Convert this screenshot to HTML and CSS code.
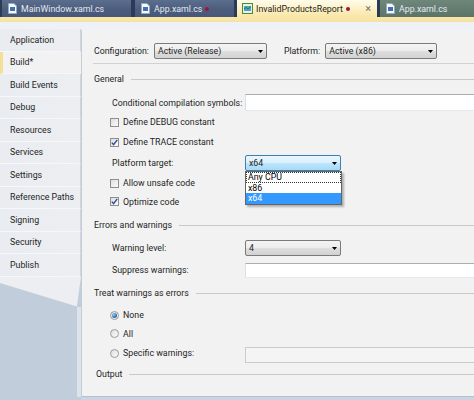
FILE: index.html
```html
<!DOCTYPE html>
<html>
<head>
<meta charset="utf-8">
<title>Project Properties</title>
<link rel="stylesheet" href="styles.css">
</head>
<body>
<div class="tabbar">
  <div class="doctab t1">
    <svg class="ficon" width="9" height="11" viewBox="0 0 9 11"><path d="M0.5 0.5 H6 L8.5 3 V10.5 H0.5 Z" fill="#f4f7fb" stroke="#9aa8bd"/><rect x="2" y="4" width="5" height="4" fill="#3f6fb5"/></svg>
    <span>MainWindow.xaml.cs</span>
  </div>
  <div class="doctab t2">
    <svg class="ficon" width="9" height="11" viewBox="0 0 9 11"><path d="M0.5 0.5 H6 L8.5 3 V10.5 H0.5 Z" fill="#f4f7fb" stroke="#9aa8bd"/><rect x="2" y="4" width="5" height="4" fill="#3f6fb5"/></svg>
    <span>App.xaml.cs</span><span class="dot"></span>
  </div>
  <div class="doctab active">
    <svg class="ficon" width="11" height="11" viewBox="0 0 11 11"><rect x="0.5" y="0.5" width="10" height="10" fill="#e8f3e0" stroke="#4c8a3a"/><rect x="2" y="3" width="7" height="5" fill="#4aa0d8"/><path d="M2 6 L4 4.5 L6 6 L9 3.5" stroke="#2f7d24" fill="none"/></svg>
    <span>InvalidProductsReport</span><span class="dot"></span><span class="close">×</span>
  </div>
  <div class="doctab t4">
    <svg class="ficon" width="9" height="11" viewBox="0 0 9 11"><path d="M0.5 0.5 H6 L8.5 3 V10.5 H0.5 Z" fill="#f4f7fb" stroke="#9aa8bd"/><rect x="2" y="4" width="5" height="4" fill="#3f6fb5"/></svg>
    <span>App.xaml.cs</span>
  </div>
</div>
<div class="strip"></div>
<div class="main">
  <div class="side">
    <div class="nav">Application</div>
    <div class="nav sel">Build*</div>
    <div class="nav">Build Events</div>
    <div class="nav">Debug</div>
    <div class="nav">Resources</div>
    <div class="nav">Services</div>
    <div class="nav">Settings</div>
    <div class="nav">Reference Paths</div>
    <div class="nav">Signing</div>
    <div class="nav">Security</div>
    <div class="nav">Publish</div>
    <div class="navend"></div>
    <div class="navfill"></div>
  </div>
  <div class="pane">
    <div class="config">
      <span>Configuration:</span>
      <div class="combo cfg"><span>Active (Release)</span><svg class="arrow" width="5" height="3" viewBox="0 0 5 3"><path d="M0 0 H5 L2.5 3 Z" fill="#000"/></svg></div>
      <span class="plat">Platform:</span>
      <div class="combo cfg"><span>Active (x86)</span><svg class="arrow" width="5" height="3" viewBox="0 0 5 3"><path d="M0 0 H5 L2.5 3 Z" fill="#000"/></svg></div>
    </div>
    <div class="hr"></div>

    <div class="sec s-general"><span>General</span><div class="line"></div></div>
    <div class="row r-cond"><span class="lbl">Conditional compilation symbols:</span><div class="text"></div></div>
    <div class="row chk r-debug"><span class="cb"></span><span>Define DEBUG constant</span></div>
    <div class="row chk r-trace"><span class="cb"><svg width="7" height="7" viewBox="0 0 7 7"><path d="M0.8 3.6 L2.6 5.6 L6.2 0.9" stroke="#2b4b96" stroke-width="1.4" fill="none"/></svg></span><span>Define TRACE constant</span></div>
    <div class="row r-pt"><span class="lbl">Platform target:</span>
      <div class="combo focus pt"><span>x64</span><svg class="arrow" width="5" height="3" viewBox="0 0 5 3"><path d="M0 0 H5 L2.5 3 Z" fill="#000"/></svg>
        <div class="drop">
          <div class="opt hot">Any CPU</div>
          <div class="opt">x86</div>
          <div class="opt on">x64</div>
        </div>
      </div>
    </div>
    <div class="row chk r-allow"><span class="cb"></span><span>Allow unsafe code</span></div>
    <div class="row chk r-opt"><span class="cb"><svg width="7" height="7" viewBox="0 0 7 7"><path d="M0.8 3.6 L2.6 5.6 L6.2 0.9" stroke="#2b4b96" stroke-width="1.4" fill="none"/></svg></span><span>Optimize code</span></div>

    <div class="sec s-errors"><span>Errors and warnings</span><div class="line"></div></div>
    <div class="row r-wl"><span class="lbl">Warning level:</span><div class="combo wl"><span>4</span><svg class="arrow" width="5" height="3" viewBox="0 0 5 3"><path d="M0 0 H5 L2.5 3 Z" fill="#000"/></svg></div></div>
    <div class="row r-sup"><span class="lbl">Suppress warnings:</span><div class="text sup"></div></div>

    <div class="sec s-treat"><span>Treat warnings as errors</span><div class="line"></div></div>
    <div class="row chk r-none"><span class="rb on"></span><span>None</span></div>
    <div class="row chk r-all"><span class="rb"></span><span>All</span></div>
    <div class="row chk r-spec"><span class="rb"></span><span class="lbl2">Specific warnings:</span><div class="text dis"></div></div>

    <div class="sec s-output"><span>Output</span><div class="line"></div></div>
  </div>
</div>
</body>
</html>
```
FILE: styles.css
```css
* { box-sizing: border-box; }
html, body { margin: 0; padding: 0; }
body {
  width: 474px;
  height: 400px;
  overflow: hidden;
  font-family: Roboto, "Liberation Sans", sans-serif;
  font-size: 8.8px;
  color: #1e1e1e;
  background: #eef1f5;
}

/* document tabs */
.tabbar {
  height: 17px;
  display: flex;
  background: #2b3a57;
  overflow: hidden;
}
.doctab {
  flex: none;
  height: 17px;
  display: flex;
  align-items: center;
  padding-left: 6px;
  color: #e3e9f3;
  background: linear-gradient(#5c6e8e, #4b5c7b 60%, #46577a);
  white-space: nowrap;
  overflow: hidden;
}
.ficon { flex: none; margin-right: 4px; }
.t1 { width: 129px; margin-left: 2px; }
.t2 { width: 99px; margin-left: 4px; }
.active {
  width: 140px;
  margin-left: 3px;
  padding-left: 5px;
  padding-right: 6px;
  color: #1e1e1e;
  background: linear-gradient(#fffcec, #fdf1c6 50%, #f8e6a6);
}
.active .ficon { margin-right: 3px; }
.t4 {
  width: 100px;
  margin-left: 3px;
  background: linear-gradient(#6f877b, #5c7468);
}
.dot {
  flex: none;
  width: 4px;
  height: 4px;
  border-radius: 50%;
  background: #a3123f;
  margin-left: 3px;
  margin-top: 1px;
}
.close {
  margin-left: auto;
  color: #707070;
  font-size: 11px;
  line-height: 1;
}
.strip {
  height: 5px;
  background: linear-gradient(#f8e7a8, #f3e2a4);
}

/* main */
.main {
  display: flex;
  height: 378px;
  padding-top: 7px;
  background: linear-gradient(#eef1f5 0, #eef1f5 375px, #cbd5e2 375px);
}
.side {
  width: 81px;
  flex: none;
  display: flex;
  flex-direction: column;
  background: #c2cddc;
}
.nav {
  height: 22.5px;
  flex: none;
  display: flex;
  align-items: center;
  padding-left: 10px;
  background: linear-gradient(90deg, #e9ecf0, #eceef2);
  border-bottom: 1px solid #f6f7f9;
  border-right: 1px solid #cfd6e0;
}
.nav.sel {
  background: #f2f2f2;
  border-right: 0;
  border-left: 3px solid #f3df95;
  padding-left: 7px;
}
.navend {
  height: 30px;
  flex: none;
  background: #eceef2;
  clip-path: polygon(0 0, 100% 0, 95% 100%, 0 22%);
}
.navfill {
  flex: 1;
  margin-left: 77px;
  background: #dde3eb;
  margin-bottom: 3px;
}

/* property pane */
.pane {
  flex: 1;
  height: 367px;
  margin-top: 1px;
  padding: 13px 0 0 12px;
  background: #f2f2f2;
  border-left: 1px solid #c4ccd7;
  border-bottom: 1px solid #b5c1d1;
  overflow: hidden;
}
.config {
  display: flex;
  align-items: center;
  height: 16px;
  white-space: nowrap;
}
.config .cfg { margin-left: 5px; width: 113px; }
.config .plat { margin-left: 17px; }
.config .cfg:last-child { width: 112px; }

.combo {
  position: relative;
  flex: none;
  height: 16px;
  display: flex;
  align-items: center;
  justify-content: space-between;
  padding: 0 3px 0 3px;
  border: 1px solid #7a7a7a;
  border-radius: 2px;
  background: linear-gradient(#f4f4f4, #ececec 50%, #dfdfdf 50%, #d2d2d2);
}
.combo.focus {
  border-color: #3c7fb1;
  background: linear-gradient(#eaf6fd, #d9f0fc 50%, #bee6fd 50%, #a7d9f5);
}
.arrow { flex: none; }

.hr {
  height: 1px;
  margin: 4px 0 0 -1px;
  background: #d2d2d2;
}

.sec {
  display: flex;
  align-items: center;
  height: 20px;
  white-space: nowrap;
}
.sec .line {
  flex: 1;
  height: 1px;
  margin-left: 7px;
  background: #c9c9c9;
}
.s-general { margin-top: 5px; }
.s-errors { margin-top: 4px; }
.s-treat { margin-top: 3px; }
.s-output { padding-left: 2px; }

.row {
  display: flex;
  align-items: center;
  height: 20px;
  padding-left: 18px;
  white-space: nowrap;
}
.lbl { width: 133px; flex: none; }
.row.chk { padding-left: 16px; }
.lbl2 { width: 122px; flex: none; }

.r-cond { height: 19px; margin-top: 4px; }
.r-pt { height: 22px; }
.r-allow { height: 18px; }
.r-opt { height: 19px; }
.r-wl { margin-top: 3px; }
.r-sup { margin-top: 2px; }
.r-none { margin-top: 2px; }
.r-all { height: 17px; }
.r-spec { height: 22px; }

.text {
  flex: none;
  width: 240px;
  height: 17px;
  background: #fff;
  border: 1px solid #dbdfe6;
  border-top-color: #abadb3;
  border-bottom-color: #e3e9ef;
}
.text.sup { height: 15px; }
.text.dis {
  height: 16px;
  margin-top: 4px;
  background: #f4f4f4;
  border-color: #c9cbd0;
}

.pt { width: 96px; }
.wl { width: 96px; }

.cb, .rb {
  flex: none;
  width: 9px;
  height: 9px;
  margin-right: 4px;
  border: 1px solid #8e8f8f;
  background: linear-gradient(135deg, #dedede, #fbfbfb);
  display: flex;
  align-items: center;
  justify-content: center;
}
.rb { border-radius: 50%; border-color: #9a9a9a; }
.rb.on::after {
  content: "";
  width: 5px;
  height: 5px;
  border-radius: 50%;
  background: radial-gradient(circle at 35% 35%, #9bd0f5, #2a6fb7 60%, #1b4d8c);
}

/* dropdown list */
.drop {
  position: absolute;
  left: -1px;
  top: 15px;
  width: 97px;
  background: #fff;
  border: 1px solid #646464;
  box-shadow: 2px 2px 2px rgba(0, 0, 0, 0.28);
  z-index: 5;
}
.opt {
  height: 10.5px;
  line-height: 10.5px;
  padding-left: 2px;
  color: #000;
}
.opt.hot { outline: 1px dotted #333; outline-offset: -1px; }
.opt.on { background: #3399ff; color: #fff; }
```
